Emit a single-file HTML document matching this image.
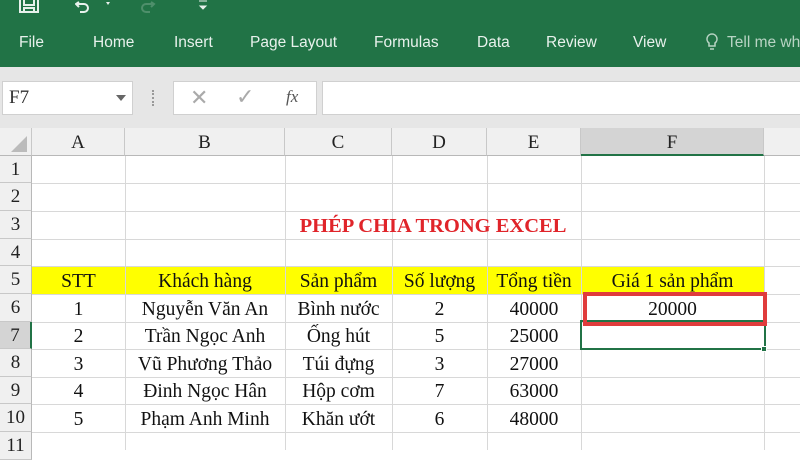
<!DOCTYPE html>
<html><head><meta charset="utf-8"><style>
*{margin:0;padding:0;box-sizing:border-box}
body{width:800px;height:450px;overflow:hidden;background:#fff;position:relative;font-family:"Liberation Serif",serif}
.ab{position:absolute}
.rib{left:0;top:0;width:800px;height:67px;background:#217346}
.tab{position:absolute;top:34px;color:#e8f1ec;font:15.5px "Liberation Sans",sans-serif;white-space:nowrap}
.fb{left:0;top:67px;width:800px;height:61px;background:#e6e6e6}
.box{position:absolute;background:#fff;border:1px solid #d0d0d0}
.hd{position:absolute;top:128px;height:28px;background:#f0f0f0;border-right:1px solid #c8c8c8;border-bottom:1px solid #b8b8b8;text-align:center;font-size:19px;line-height:30px;color:#222}
.rh{position:absolute;left:0;width:32px;background:#f0f0f0;border-bottom:1px solid #c8c8c8;border-right:1px solid #b8b8b8;text-align:center;font-size:19px;color:#222}
.vl{position:absolute;top:156px;width:1px;height:294px;background:#d8d8d8}
.hl{position:absolute;left:32px;width:768px;height:1px;background:#d8d8d8}
.c{position:absolute;text-align:center;font-size:19.5px;color:#111;line-height:28px;white-space:nowrap}
</style></head><body>
<div class="ab rib"></div>
<svg class="ab" style="left:18px;top:0" width="22" height="14" viewBox="0 0 22 14"><path d="M2 0v12h18V0M6 0v5h10V0M6 12V8h10v4" fill="none" stroke="#e8f1ec" stroke-width="2"/></svg>
<svg class="ab" style="left:75px;top:0" width="40" height="14" viewBox="0 0 40 14"><path d="M4 2l-3 2 3 3M1 4h8a4 4 0 0 1 0 8H5" fill="none" stroke="#e8f1ec" stroke-width="2"/><path d="M31 2l4 0-2 3z" fill="#e8f1ec"/></svg>
<svg class="ab" style="left:133px;top:0" width="40" height="14" viewBox="0 0 40 14"><path d="M18 2l3 2-3 3M21 4h-8a4 4 0 0 0 0 8h4" fill="none" stroke="#4e8f6b" stroke-width="2"/></svg>
<svg class="ab" style="left:198px;top:0" width="10" height="14"><path d="M1 1h8M2 6l3 3 3-3z" fill="#e8f1ec" stroke="#e8f1ec"/></svg>
<div class="tab" style="left:19px">File</div>
<div class="tab" style="left:93px">Home</div>
<div class="tab" style="left:174px">Insert</div>
<div class="tab" style="left:250px">Page Layout</div>
<div class="tab" style="left:374px">Formulas</div>
<div class="tab" style="left:477px">Data</div>
<div class="tab" style="left:546px">Review</div>
<div class="tab" style="left:633px">View</div>
<svg class="ab" style="left:705px;top:32px" width="14" height="20"><path d="M7 2a5 5 0 0 0-3 9v3h6v-3a5 5 0 0 0-3-9zM5 17h4" fill="none" stroke="#b8d4c4" stroke-width="1.5"/></svg>
<div class="tab" style="left:727px;color:#b8d4c4">Tell me wh</div>
<div class="ab fb"></div>
<div class="box" style="left:2px;top:81px;width:131px;height:34px"><span style="position:absolute;left:6px;top:5px;font-size:19px;color:#333">F7</span><span style="position:absolute;left:113px;top:13px;border:5px solid transparent;border-top:6px solid #666"></span></div>
<div class="ab" style="left:152px;top:90px;width:2px;height:16px;border-left:2px dotted #999"></div>
<div class="box" style="left:173px;top:81px;width:144px;height:34px"><span style="position:absolute;left:16px;top:3px;font:22px 'Liberation Sans',sans-serif;color:#aaa">✕</span><span style="position:absolute;left:62px;top:3px;font:22px 'DejaVu Sans',sans-serif;color:#aaa">✓</span><span style="position:absolute;left:112px;top:5px;font-style:italic;font-size:17px;color:#555">fx</span></div>
<div class="box" style="left:322px;top:81px;width:480px;height:34px"></div>
<div class="hd" style="left:0;width:32px"><svg width="20" height="20" style="position:absolute;left:9px;top:6px"><path d="M18 2V18H2z" fill="#bbb"/></svg></div>
<div class="hd" style="left:32px;width:93px">A</div>
<div class="hd" style="left:125px;width:160px">B</div>
<div class="hd" style="left:285px;width:107px">C</div>
<div class="hd" style="left:392px;width:95px">D</div>
<div class="hd" style="left:487px;width:94px">E</div>
<div class="hd" style="left:581px;width:183px;background:#d4d4d4;border-bottom:2px solid #217346">F</div>
<div class="hd" style="left:764px;width:40px"></div>
<div class="rh" style="top:156px;height:27px;line-height:28px">1</div>
<div class="rh" style="top:183px;height:28px;line-height:28px">2</div>
<div class="rh" style="top:211px;height:28px;line-height:28px">3</div>
<div class="rh" style="top:239px;height:27px;line-height:28px">4</div>
<div class="rh" style="top:266px;height:28px;line-height:28px">5</div>
<div class="rh" style="top:294px;height:28px;line-height:28px">6</div>
<div class="rh" style="top:322px;height:27px;line-height:28px;background:#d4d4d4;border-right:2px solid #217346">7</div>
<div class="rh" style="top:349px;height:28px;line-height:28px">8</div>
<div class="rh" style="top:377px;height:27px;line-height:28px">9</div>
<div class="rh" style="top:404px;height:28px;line-height:28px">10</div>
<div class="rh" style="top:432px;height:28px;line-height:28px">11</div>
<div class="ab" style="left:32px;top:266px;width:732px;height:28px;background:#ffff00"></div>
<div class="vl" style="left:125px"></div><div class="vl" style="left:285px"></div><div class="vl" style="left:392px"></div><div class="vl" style="left:487px"></div><div class="vl" style="left:581px"></div><div class="vl" style="left:764px"></div>
<div class="hl" style="top:183px"></div><div class="hl" style="top:211px"></div><div class="hl" style="top:239px"></div><div class="hl" style="top:266px"></div><div class="hl" style="top:294px"></div><div class="hl" style="top:322px"></div><div class="hl" style="top:349px"></div><div class="hl" style="top:377px"></div><div class="hl" style="top:404px"></div><div class="hl" style="top:432px"></div>
<div class="c" style="left:285px;width:296px;top:212px;color:#e0242a;font-weight:bold;font-size:20.5px">PHÉP CHIA TRONG EXCEL</div>
<div class="c" style="left:32px;width:93px;top:268px">STT</div>
<div class="c" style="left:125px;width:160px;top:268px">Khách hàng</div>
<div class="c" style="left:285px;width:107px;top:268px">Sản phẩm</div>
<div class="c" style="left:392px;width:95px;top:268px">Số lượng</div>
<div class="c" style="left:487px;width:94px;top:268px">Tổng tiền</div>
<div class="c" style="left:581px;width:183px;top:268px">Giá 1 sản phẩm</div>

<div class="c" style="left:32px;width:93px;top:296px">1</div><div class="c" style="left:125px;width:160px;top:296px">Nguyễn Văn An</div><div class="c" style="left:285px;width:107px;top:296px">Bình nước</div><div class="c" style="left:392px;width:95px;top:296px">2</div><div class="c" style="left:487px;width:94px;top:296px">40000</div><div class="c" style="left:581px;width:183px;top:296px">20000</div>
<div class="c" style="left:32px;width:93px;top:323px">2</div><div class="c" style="left:125px;width:160px;top:323px">Trần Ngọc Anh</div><div class="c" style="left:285px;width:107px;top:323px">Ống hút</div><div class="c" style="left:392px;width:95px;top:323px">5</div><div class="c" style="left:487px;width:94px;top:323px">25000</div>
<div class="c" style="left:32px;width:93px;top:351px">3</div><div class="c" style="left:125px;width:160px;top:351px">Vũ Phương Thảo</div><div class="c" style="left:285px;width:107px;top:351px">Túi đựng</div><div class="c" style="left:392px;width:95px;top:351px">3</div><div class="c" style="left:487px;width:94px;top:351px">27000</div>
<div class="c" style="left:32px;width:93px;top:378px">4</div><div class="c" style="left:125px;width:160px;top:378px">Đinh Ngọc Hân</div><div class="c" style="left:285px;width:107px;top:378px">Hộp cơm</div><div class="c" style="left:392px;width:95px;top:378px">7</div><div class="c" style="left:487px;width:94px;top:378px">63000</div>
<div class="c" style="left:32px;width:93px;top:406px">5</div><div class="c" style="left:125px;width:160px;top:406px">Phạm Anh Minh</div><div class="c" style="left:285px;width:107px;top:406px">Khăn ướt</div><div class="c" style="left:392px;width:95px;top:406px">6</div><div class="c" style="left:487px;width:94px;top:406px">48000</div>

<div class="ab" style="left:580px;top:320px;width:186px;height:30px;border:2px solid #217346"></div>
<div class="ab" style="left:761px;top:346px;width:6px;height:6px;background:#217346;border:1px solid #fff"></div>
<div class="ab" style="left:583px;top:292px;width:184px;height:34px;border:4px solid #e03c3c"></div>
</body></html>
